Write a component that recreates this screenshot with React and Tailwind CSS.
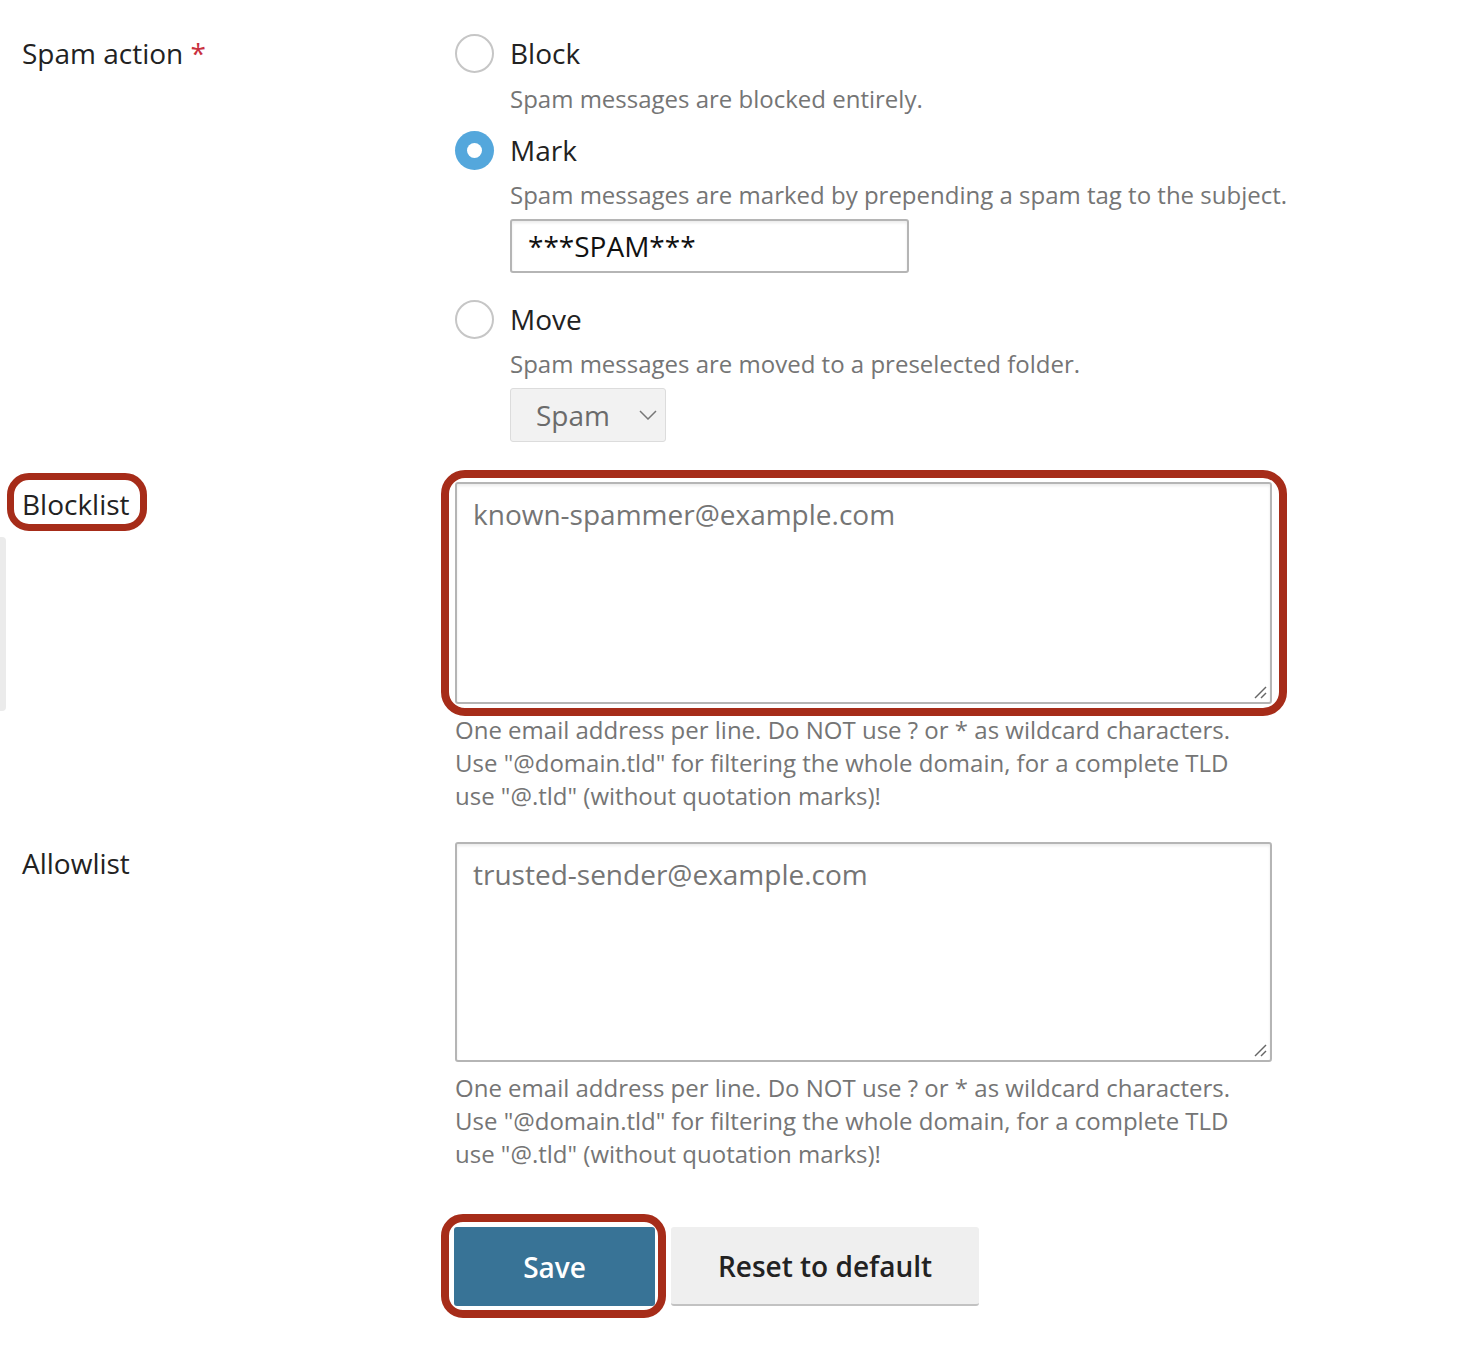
import React from "react";

const font = { fontFamily: '"Open Sans", "Liberation Sans", sans-serif' };

function Radio({ checked, label }) {
  return (
    <div className="flex items-center h-[40px]">
      {checked ? (
        <span className="w-[39px] h-[39px] rounded-full bg-[#54a7dc] flex items-center justify-center shrink-0">
          <span className="w-[15px] h-[15px] rounded-full bg-white" />
        </span>
      ) : (
        <span className="w-[39px] h-[39px] rounded-full border-2 border-[#c6c6c6] bg-white shrink-0" />
      )}
      <span className="ml-[16px] text-[28px] leading-[40px] text-[#222]">{label}</span>
    </div>
  );
}

function Help() {
  return (
    <div className="mt-[9px] text-[24px] leading-[33px] text-[#757575] w-[800px]">
      One email address per line. Do NOT use ? or * as wildcard characters.
      <br />
      Use "@domain.tld" for filtering the whole domain, for a complete TLD
      <br />
      use "@.tld" (without quotation marks)!
    </div>
  );
}

function TextArea({ placeholder, h }) {
  return (
    <div
      className={`relative w-[817px] ${h} border-2 border-[#b5b5b5] rounded-[3px] bg-white shadow-[inset_0_2px_3px_rgba(0,0,0,0.08)] px-[16px] pt-[10px]`}
    >
      <span className="text-[28px] leading-[40px] text-[#757575]">{placeholder}</span>
      <svg className="absolute right-[2px] bottom-[2px]" width="16" height="16" viewBox="0 0 16 16">
        <line x1="3" y1="14" x2="14" y2="3" stroke="#666" strokeWidth="1.5" />
        <line x1="9" y1="14" x2="14" y2="9" stroke="#666" strokeWidth="1.5" />
      </svg>
    </div>
  );
}

export default function App() {
  return (
    <div className="relative w-[1480px] h-[1356px] bg-white overflow-hidden" style={font}>
      <div className="absolute left-0 top-[537px] w-[6px] h-[174px] bg-[#ebebeb] rounded-r-[4px]" />
      <div className="pl-[22px] pt-[33px]">
        {/* Spam action */}
        <div className="flex">
          <div className="w-[433px] text-[28px] leading-[40px] text-[#222]">
            Spam action <span className="text-[#c9303e]">*</span>
          </div>
          <div className="flex flex-col">
            <Radio label="Block" />
            <div className="ml-[55px] mt-[9px] text-[24px] leading-[33px] text-[#757575]">
              Spam messages are blocked entirely.
            </div>
            <div className="mt-[15px]">
              <Radio checked label="Mark" />
            </div>
            <div className="ml-[55px] mt-[8px] text-[24px] leading-[33px] text-[#757575]">
              Spam messages are marked by prepending a spam tag to the subject.
            </div>
            <div className="ml-[55px] mt-[8px] w-[399px] h-[54px] border-2 border-[#b5b5b5] rounded-[3px] bg-white shadow-[inset_0_2px_3px_rgba(0,0,0,0.08)] px-[16px] flex items-center">
              <span className="text-[28px] leading-[40px] text-[#111]">***SPAM***</span>
            </div>
            <div className="mt-[26px]">
              <Radio label="Move" />
            </div>
            <div className="ml-[55px] mt-[8px] text-[24px] leading-[33px] text-[#757575]">
              Spam messages are moved to a preselected folder.
            </div>
            <div className="ml-[55px] mt-[8px] w-[156px] h-[54px] border border-[#dcdcdc] rounded-[3px] bg-[#f2f2f2] flex items-center pl-[25px] pr-[8px]">
              <span className="text-[28px] leading-[40px] text-[#6b6b6b]">Spam</span>
              <svg className="ml-auto" width="18" height="10" viewBox="0 0 18 10">
                <polyline points="1,1 9,9 17,1" fill="none" stroke="#777" strokeWidth="1.5" />
              </svg>
            </div>
          </div>
        </div>

        {/* Blocklist */}
        <div className="flex mt-[40px]">
          <div className="w-[433px] pt-[2px]">
            <span className="relative inline-block text-[28px] leading-[40px] text-[#222]">
              Blocklist
              <span className="absolute left-[-15px] right-[-17px] top-[-11px] bottom-[-7px] border-[7px] border-[#a62c19] rounded-[22px]" />
            </span>
          </div>
          <div className="flex flex-col">
            <div className="relative">
              <TextArea placeholder="known-spammer@example.com" h="h-[222px]" />
              <span className="absolute left-[-14px] right-[-15px] top-[-12px] bottom-[-12px] border-[8px] border-[#a62c19] rounded-[24px]" />
            </div>
            <Help />
          </div>
        </div>

        {/* Allowlist */}
        <div className="flex mt-[30px]">
          <div className="w-[433px] pt-[1px] text-[28px] leading-[40px] text-[#222]">Allowlist</div>
          <div className="flex flex-col">
            <TextArea placeholder="trusted-sender@example.com" h="h-[220px]" />
            <Help />
          </div>
        </div>

        {/* Buttons */}
        <div className="flex mt-[57px]">
          <div className="w-[432px]" />
          <div className="flex gap-[16px]">
            <div className="relative">
              <button className="w-[201px] h-[79px] bg-[#387396] rounded-[3px] text-white text-[28px] font-semibold">
                Save
              </button>
              <span className="absolute left-[-13px] right-[-11px] top-[-13px] bottom-[-12px] border-[8px] border-[#a62c19] rounded-[22px]" />
            </div>
            <button className="w-[308px] h-[79px] bg-[#efefef] rounded-[3px] border-b-2 border-[#c2c2c2] text-[#222] text-[28px] font-semibold">
              Reset to default
            </button>
          </div>
        </div>
      </div>
    </div>
  );
}
